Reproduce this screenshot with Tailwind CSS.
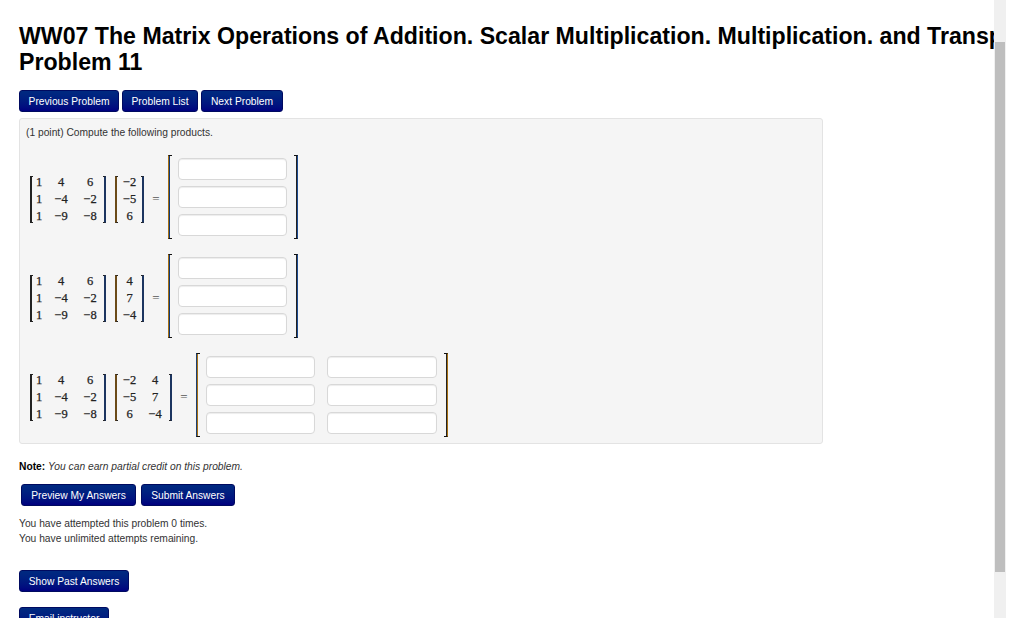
<!DOCTYPE html>
<html lang="en">
<head>
  <meta charset="UTF-8" />
  <title>WW07 Problem 11</title>
  <script src="https://cdn.jsdelivr.net/npm/@tailwindcss/browser@4"></script>
</head>
<body class="bg-white overflow-hidden font-['Liberation_Sans',Arial,sans-serif] text-[#333]">
  <div class="flex h-[618px] w-[1024px]">
    <!-- Page content -->
    <main class="w-[994px] h-[618px] overflow-hidden pl-[19px] pt-[23px]">
      <h2 class="text-[23.15px] leading-[26px] font-bold text-black whitespace-nowrap">WW07 The Matrix Operations of Addition. Scalar Multiplication. Multiplication. and Transpose<br>Problem 11</h2>

      <!-- Problem nav -->
      <nav class="flex gap-[3px] mt-[15px]">
        <a class="h-[22px] w-[100px] pt-px flex items-center justify-center rounded-[3px] text-white text-[10.25px] bg-gradient-to-b from-[#002a80] to-[#00007f] border border-[#000a60]">Previous Problem</a>
        <a class="h-[22px] w-[76px] pt-px flex items-center justify-center rounded-[3px] text-white text-[10.25px] bg-gradient-to-b from-[#002a80] to-[#00007f] border border-[#000a60]">Problem List</a>
        <a class="h-[22px] w-[82px] pt-px flex items-center justify-center rounded-[3px] text-white text-[10.25px] bg-gradient-to-b from-[#002a80] to-[#00007f] border border-[#000a60]">Next Problem</a>
      </nav>

      <!-- Problem body -->
      <section class="w-[804px] h-[326px] mt-[6px] bg-[#f5f5f5] border border-[#e3e3e3] rounded-[3px] pl-[6px] pt-[6px]">
        <p class="text-[10.25px] leading-[15px]">(1 point) Compute the following products.</p>

        <!-- Row 1 -->
        <div class="flex items-center h-[84px] mt-[15px] pl-[4px]">
          <div class="flex items-center mt-[4px] font-['Liberation_Serif',serif] text-[12.5px] leading-[17px] text-[#222] [-webkit-text-stroke:0.25px_#222]">
            <div class="w-[3px] h-[47px] border-l-2 border-y border-[#222]"></div>
            <div class="grid grid-cols-[12px_32px_26px] text-center"><span>1</span><span>4</span><span>6</span><span>1</span><span>−4</span><span>−2</span><span>1</span><span>−9</span><span>−8</span></div>
            <div class="w-[3px] h-[47px] border-r-2 border-y border-[#222] border-r-[#1c3560]"></div>
            <div class="w-[3px] h-[47px] ml-[9px] border-l-2 border-y border-[#222] border-l-[#6b4a18]"></div>
            <div class="grid grid-cols-[23px] text-center"><span>−2</span><span>−5</span><span>6</span></div>
            <div class="w-[3px] h-[47px] border-r-2 border-y border-[#222] border-r-[#1c3560]"></div>
          </div>
          <span class="w-[24px] text-center mt-[4px] font-['Liberation_Serif',serif] text-[13px] text-[#555]">=</span>
          <div class="w-[4px] h-[84px] border-l border-y border-[#111] border-l-[#a56f12] shadow-[inset_1px_0_0_#123a78]"></div>
          <div class="flex flex-col gap-[6px] ml-[6px] mr-[7px]">
            <input class="w-[109px] h-[22px] bg-white border border-[#d8d8d8] rounded-[4px] shadow-[inset_0_1px_1px_rgba(0,0,0,0.075)]" />
            <input class="w-[109px] h-[22px] bg-white border border-[#d8d8d8] rounded-[4px] shadow-[inset_0_1px_1px_rgba(0,0,0,0.075)]" />
            <input class="w-[109px] h-[22px] bg-white border border-[#d8d8d8] rounded-[4px] shadow-[inset_0_1px_1px_rgba(0,0,0,0.075)]" />
          </div>
          <div class="w-[4px] h-[84px] border-r border-y border-[#111] border-r-[#1c4a90] shadow-[inset_-1px_0_0_#222]"></div>
        </div>

        <!-- Row 2 -->
        <div class="flex items-center h-[84px] mt-[15px] pl-[4px]">
          <div class="flex items-center mt-[4px] font-['Liberation_Serif',serif] text-[12.5px] leading-[17px] text-[#222] [-webkit-text-stroke:0.25px_#222]">
            <div class="w-[3px] h-[47px] border-l-2 border-y border-[#222]"></div>
            <div class="grid grid-cols-[12px_32px_26px] text-center"><span>1</span><span>4</span><span>6</span><span>1</span><span>−4</span><span>−2</span><span>1</span><span>−9</span><span>−8</span></div>
            <div class="w-[3px] h-[47px] border-r-2 border-y border-[#222] border-r-[#1c3560]"></div>
            <div class="w-[3px] h-[47px] ml-[9px] border-l-2 border-y border-[#222] border-l-[#6b4a18]"></div>
            <div class="grid grid-cols-[23px] text-center"><span>4</span><span>7</span><span>−4</span></div>
            <div class="w-[3px] h-[47px] border-r-2 border-y border-[#222] border-r-[#1c3560]"></div>
          </div>
          <span class="w-[24px] text-center mt-[4px] font-['Liberation_Serif',serif] text-[13px] text-[#555]">=</span>
          <div class="w-[4px] h-[84px] border-l border-y border-[#111] border-l-[#a56f12] shadow-[inset_1px_0_0_#123a78]"></div>
          <div class="flex flex-col gap-[6px] ml-[6px] mr-[7px]">
            <input class="w-[109px] h-[22px] bg-white border border-[#d8d8d8] rounded-[4px] shadow-[inset_0_1px_1px_rgba(0,0,0,0.075)]" />
            <input class="w-[109px] h-[22px] bg-white border border-[#d8d8d8] rounded-[4px] shadow-[inset_0_1px_1px_rgba(0,0,0,0.075)]" />
            <input class="w-[109px] h-[22px] bg-white border border-[#d8d8d8] rounded-[4px] shadow-[inset_0_1px_1px_rgba(0,0,0,0.075)]" />
          </div>
          <div class="w-[4px] h-[84px] border-r border-y border-[#111] border-r-[#1c4a90] shadow-[inset_-1px_0_0_#222]"></div>
        </div>

        <!-- Row 3 -->
        <div class="flex items-center h-[84px] mt-[15px] pl-[4px]">
          <div class="flex items-center mt-[4px] font-['Liberation_Serif',serif] text-[12.5px] leading-[17px] text-[#222] [-webkit-text-stroke:0.25px_#222]">
            <div class="w-[3px] h-[47px] border-l-2 border-y border-[#222]"></div>
            <div class="grid grid-cols-[12px_32px_26px] text-center"><span>1</span><span>4</span><span>6</span><span>1</span><span>−4</span><span>−2</span><span>1</span><span>−9</span><span>−8</span></div>
            <div class="w-[3px] h-[47px] border-r-2 border-y border-[#222] border-r-[#1c3560]"></div>
            <div class="w-[3px] h-[47px] ml-[9px] border-l-2 border-y border-[#222] border-l-[#6b4a18]"></div>
            <div class="grid grid-cols-[23px_28px] text-center"><span>−2</span><span>4</span><span>−5</span><span>7</span><span>6</span><span>−4</span></div>
            <div class="w-[3px] h-[47px] border-r-2 border-y border-[#222] border-r-[#1c3560]"></div>
          </div>
          <span class="w-[24px] text-center mt-[4px] font-['Liberation_Serif',serif] text-[13px] text-[#555]">=</span>
          <div class="w-[4px] h-[84px] border-l border-y border-[#111] border-l-[#1c3f70] shadow-[inset_1px_0_0_#a56f12]"></div>
          <div class="grid grid-cols-[109px_110px] gap-x-[12px] gap-y-[6px] ml-[6px] mr-[7px]">
            <input class="w-[109px] h-[22px] bg-white border border-[#d8d8d8] rounded-[4px] shadow-[inset_0_1px_1px_rgba(0,0,0,0.075)]" />
            <input class="w-[110px] h-[22px] bg-white border border-[#d8d8d8] rounded-[4px] shadow-[inset_0_1px_1px_rgba(0,0,0,0.075)]" />
            <input class="w-[109px] h-[22px] bg-white border border-[#d8d8d8] rounded-[4px] shadow-[inset_0_1px_1px_rgba(0,0,0,0.075)]" />
            <input class="w-[110px] h-[22px] bg-white border border-[#d8d8d8] rounded-[4px] shadow-[inset_0_1px_1px_rgba(0,0,0,0.075)]" />
            <input class="w-[109px] h-[22px] bg-white border border-[#d8d8d8] rounded-[4px] shadow-[inset_0_1px_1px_rgba(0,0,0,0.075)]" />
            <input class="w-[110px] h-[22px] bg-white border border-[#d8d8d8] rounded-[4px] shadow-[inset_0_1px_1px_rgba(0,0,0,0.075)]" />
          </div>
          <div class="w-[4px] h-[84px] border-r border-y border-[#111] border-r-[#a56f12] shadow-[inset_-1px_0_0_#222]"></div>
        </div>
      </section>

      <p class="text-[10.25px] leading-[15px] mt-[15px]"><b class="text-black">Note:</b> <i>You can earn partial credit on this problem.</i></p>

      <div class="flex gap-[5px] mt-[10px] ml-[2px]">
        <a class="h-[22px] w-[115px] pt-px flex items-center justify-center rounded-[3px] text-white text-[10.25px] bg-gradient-to-b from-[#002a80] to-[#00007f] border border-[#000a60]">Preview My Answers</a>
        <a class="h-[22px] w-[94px] pt-px flex items-center justify-center rounded-[3px] text-white text-[10.25px] bg-gradient-to-b from-[#002a80] to-[#00007f] border border-[#000a60]">Submit Answers</a>
      </div>

      <p class="text-[10.25px] leading-[15px] mt-[10px]">You have attempted this problem 0 times.<br>You have unlimited attempts remaining.</p>

      <a class="h-[22px] w-[110px] mt-[24px] pt-px flex items-center justify-center rounded-[3px] text-white text-[10.25px] bg-gradient-to-b from-[#002a80] to-[#00007f] border border-[#000a60]">Show Past Answers</a>
      <a class="h-[22px] w-[90px] mt-[15px] pt-px flex items-center justify-center rounded-[3px] text-white text-[10.25px] bg-gradient-to-b from-[#002a80] to-[#00007f] border border-[#000a60]">Email instructor</a>
    </main>

    <!-- Scrollbar -->
    <div class="w-[12px] h-[618px] bg-[#f0f0f0] pt-[42px] px-px">
      <div class="h-[530px] bg-[#bebebe]"></div>
    </div>
  </div>
</body>
</html>
